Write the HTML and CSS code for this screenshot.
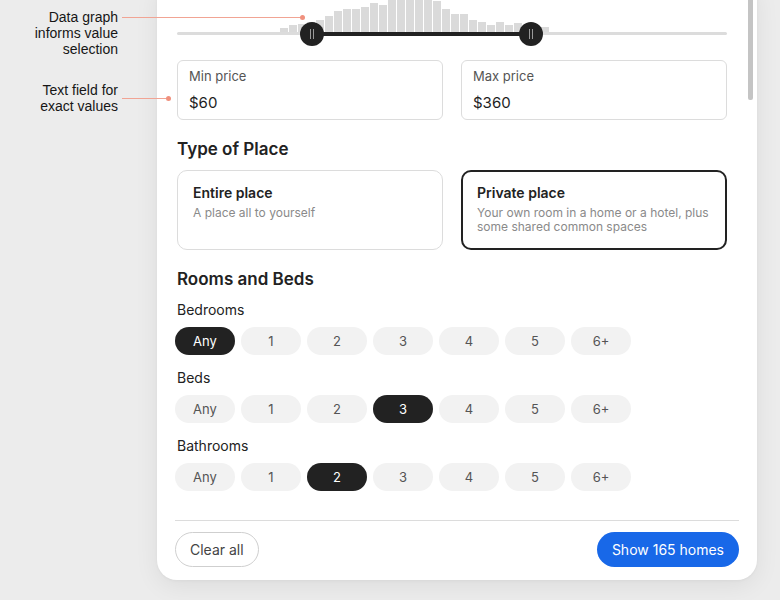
FILE: index.html
```html
<!DOCTYPE html>
<html>
<head>
<meta charset="utf-8">
<link rel="stylesheet" href="styles.css">
</head>
<body>
<div class="page">
  <aside class="notes">
    <div class="note note-graph">Data graph<br>informs value<br>selection</div>
    <div class="note note-field">Text field for<br>exact values</div>
  </aside>
  <section class="panel">
    <div class="scroll">
      <div class="hist">
        <span class="bar" style="height:4px"></span>
        <span class="bar" style="height:7px"></span>
        <span class="bar" style="height:8px"></span>
        <span class="bar" style="height:10px"></span>
        <span class="bar" style="height:12px"></span>
        <span class="bar" style="height:16px"></span>
        <span class="bar" style="height:21px"></span>
        <span class="bar" style="height:23px"></span>
        <span class="bar" style="height:23px"></span>
        <span class="bar" style="height:25px"></span>
        <span class="bar" style="height:29px"></span>
        <span class="bar" style="height:27px"></span>
        <span class="bar" style="height:40px"></span>
        <span class="bar" style="height:46px"></span>
        <span class="bar" style="height:50px"></span>
        <span class="bar" style="height:44px"></span>
        <span class="bar" style="height:38px"></span>
        <span class="bar" style="height:31px"></span>
        <span class="bar" style="height:23px"></span>
        <span class="bar" style="height:18px"></span>
        <span class="bar" style="height:18px"></span>
        <span class="bar" style="height:12px"></span>
        <span class="bar" style="height:10px"></span>
        <span class="bar" style="height:7px"></span>
        <span class="bar" style="height:10px"></span>
        <span class="bar" style="height:7px"></span>
        <span class="bar" style="height:9px"></span>
        <span class="bar" style="height:8px"></span>
        <span class="bar" style="height:6px"></span>
        <span class="bar" style="height:5px"></span>
      </div>
      <div class="track">
        <div class="range"></div>
        <div class="handle handle-min"></div>
        <div class="handle handle-max"></div>
      </div>

      <div class="prices">
        <div class="field">
          <div class="field-label">Min price</div>
          <div class="field-value">$60</div>
        </div>
        <div class="field">
          <div class="field-label">Max price</div>
          <div class="field-value">$360</div>
        </div>
      </div>

      <h2 class="heading heading-type">Type of Place</h2>
      <div class="cards">
        <div class="card">
          <div class="card-title">Entire place</div>
          <div class="card-desc">A place all to yourself</div>
        </div>
        <div class="card card-selected">
          <div class="card-title">Private place</div>
          <div class="card-desc">Your own room in a home or a hotel, plus some shared common spaces</div>
        </div>
      </div>

      <h2 class="heading heading-rooms">Rooms and Beds</h2>

      <div class="group">
        <div class="group-label">Bedrooms</div>
        <div class="pills">
          <span class="pill pill-on">Any</span><span class="pill">1</span><span class="pill">2</span><span class="pill">3</span><span class="pill">4</span><span class="pill">5</span><span class="pill">6+</span>
        </div>
      </div>
      <div class="group">
        <div class="group-label">Beds</div>
        <div class="pills">
          <span class="pill">Any</span><span class="pill">1</span><span class="pill">2</span><span class="pill pill-on">3</span><span class="pill">4</span><span class="pill">5</span><span class="pill">6+</span>
        </div>
      </div>
      <div class="group">
        <div class="group-label">Bathrooms</div>
        <div class="pills">
          <span class="pill">Any</span><span class="pill">1</span><span class="pill pill-on">2</span><span class="pill">3</span><span class="pill">4</span><span class="pill">5</span><span class="pill">6+</span>
        </div>
      </div>
    </div>
    <div class="scrollthumb"></div>
    <footer class="footer">
      <button class="btn btn-clear">Clear all</button>
      <button class="btn btn-show">Show 165 homes</button>
    </footer>
  </section>
</div>
</body>
</html>
```
FILE: styles.css
```css
* { box-sizing: border-box; }
html, body { margin: 0; padding: 0; }
body {
  background: #ececec;
  font-family: Inter, "Noto Sans", sans-serif;
  color: #222;
  width: 780px;
  height: 600px;
  overflow: hidden;
}
.page {
  display: flex;
  align-items: flex-start;
}
.notes {
  width: 157px;
  flex: none;
  font-family: "Liberation Sans", Arial, sans-serif;
  font-size: 14px;
  line-height: 16px;
  color: #161616;
  text-align: right;
  padding-right: 39px;
  position: relative;
  z-index: 2;
}
.note { position: relative; }
.note-graph { margin-top: 9px; }
.note-field { margin-top: 25px; }
.note::after {
  content: "";
  position: absolute;
  left: calc(100% + 4px);
  height: 1px;
  background: #f1a494;
}
.note::before {
  content: "";
  position: absolute;
  width: 5px;
  height: 5px;
  border-radius: 50%;
  background: #f0907d;
}
.note-graph::after { top: 8px; width: 178px; }
.note-graph::before { top: 6px; left: calc(100% + 182px); }
.note-field::after { top: 16px; width: 44px; }
.note-field::before { top: 14px; left: calc(100% + 48px); }

.panel {
  width: 600px;
  height: 600px;
  margin-top: -20px;
  flex: none;
  background: #fff;
  border-radius: 20px;
  box-shadow: 0 6px 24px rgba(0,0,0,0.07), 0 1px 3px rgba(0,0,0,0.04);
  display: flex;
  flex-direction: column;
  position: relative;
  overflow: hidden;
}
.scroll {
  flex: 1;
  padding: 0 30px 0 20px;
  overflow: hidden;
}
.scrollthumb {
  position: absolute;
  right: 4px;
  top: 0;
  width: 5px;
  height: 120px;
  background: #c4c4c4;
  border-radius: 2px;
}

.hist {
  height: 52px;
  display: flex;
  align-items: flex-end;
  gap: 1px;
  padding-left: 103px;
}
.bar {
  width: 8px;
  background: #dadada;
  flex: none;
}
.track {
  position: relative;
  height: 3px;
  background: #dcdcdc;
  border-radius: 2px;
}
.range {
  position: absolute;
  left: 135px;
  width: 219px;
  top: -0.5px;
  height: 4px;
  background: #222;
}
.handle {
  position: absolute;
  top: -10.5px;
  width: 24px;
  height: 24px;
  margin-left: -12px;
  border-radius: 50%;
  background: #222;
}
.handle::before, .handle::after {
  content: "";
  position: absolute;
  top: 7px;
  width: 1px;
  height: 10px;
  background: #9a9a9a;
}
.handle::before { left: 10px; }
.handle::after { left: 13px; }
.handle-min { left: 135px; }
.handle-max { left: 354px; }

.prices {
  margin-top: 25px;
  display: flex;
  gap: 18px;
}
.field {
  flex: 1;
  height: 60px;
  border: 1px solid #dcdcdc;
  border-radius: 6px;
  padding: 7px 11px;
}
.field-label {
  font-size: 13px;
  line-height: 16px;
  color: #555;
}
.field-value {
  margin-top: 9px;
  font-size: 15px;
  line-height: 20px;
  color: #1e1e1e;
}

.heading {
  margin: 0;
  font-size: 17px;
  line-height: 22px;
  font-weight: 600;
  color: #222;
}
.heading-type { margin-top: 18px; }
.heading-rooms { margin-top: 18px; }

.cards {
  margin-top: 10px;
  display: flex;
  gap: 18px;
}
.card {
  flex: 1;
  height: 80px;
  border: 1px solid #dcdcdc;
  border-radius: 10px;
  padding: 13px 15px;
}
.card-selected {
  border: 2px solid #222;
  padding: 12px 14px;
}
.card-title {
  font-size: 14px;
  line-height: 18px;
  font-weight: 600;
  color: #222;
}
.card-desc {
  margin-top: 4px;
  font-size: 12px;
  line-height: 14px;
  color: #8a8a8a;
}

.group-label {
  margin-top: 11px;
  font-size: 14px;
  line-height: 18px;
  color: #222;
}
.group + .group .group-label { margin-top: 14px; }
.pills {
  margin-top: 8px;
  margin-left: -2px;
  display: flex;
  gap: 6px;
}
.pill {
  width: 60px;
  height: 28px;
  border-radius: 14px;
  background: #f2f2f2;
  color: #555;
  font-size: 13px;
  display: flex;
  align-items: center;
  justify-content: center;
}
.pill-on {
  background: #222;
  color: #fff;
}

.footer {
  margin: 0 18px;
  border-top: 1px solid #dcdcdc;
  padding: 11px 0 13px;
  display: flex;
  justify-content: space-between;
  align-items: center;
  flex: none;
}
.btn {
  height: 35px;
  border-radius: 18px;
  font-family: Inter, "Noto Sans", sans-serif;
  font-size: 14px;
  padding: 0 14px;
  cursor: pointer;
}
.btn-clear {
  background: #fff;
  border: 1px solid #cfcfcf;
  color: #444;
}
.btn-show {
  background: #1868e8;
  border: none;
  color: #fff;
  padding: 0 15px;
}
```
